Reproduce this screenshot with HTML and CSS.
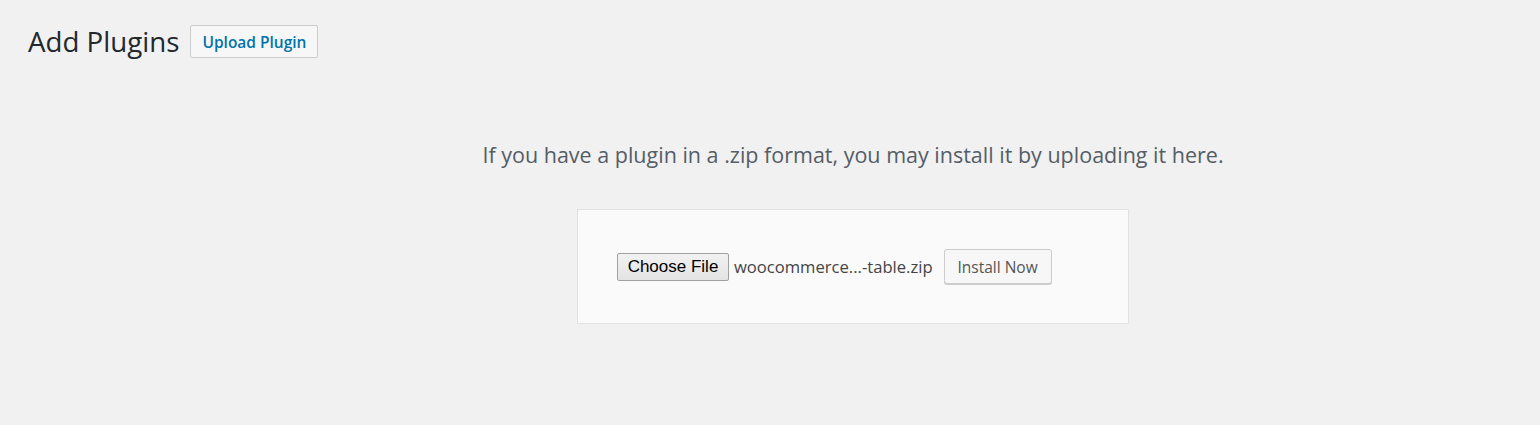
FILE: index.html
```html
<!DOCTYPE html>
<html lang="en">
<head>
<meta charset="utf-8">
<title>Add Plugins</title>
<link rel="stylesheet" href="styles.css">
</head>
<body>
<div class="wrap">
  <div class="header">
    <h1 class="page-title">Add Plugins</h1>
    <a class="title-action" href="#">Upload Plugin</a>
  </div>
  <div class="upload-plugin">
    <p class="install-help">If you have a plugin in a .zip format, you may install it by uploading it here.</p>
    <form class="upload-form">
      <span class="file-input">
        <button type="button" class="choose-btn">Choose File</button>
        <span class="file-name">woocommerce...-table.zip</span>
      </span>
      <button type="button" class="install-btn">Install Now</button>
    </form>
  </div>
</div>
</body>
</html>
```

FILE: styles.css
```css
html, body {
  margin: 0;
  padding: 0;
  background: #f1f1f1;
  height: 100%;
}
body {
  font-family: "Open Sans", "Noto Sans", sans-serif;
  color: #23282d;
}
.wrap {
  padding: 25px 0 0 28px;
}
.header {
  display: flex;
  align-items: center;
  gap: 11px;
  height: 33px;
}
.page-title {
  margin: 0;
  font-size: 27.7px;
  font-weight: 400;
  line-height: 33px;
  color: #23282d;
}
.title-action {
  display: flex;
  align-items: center;
  box-sizing: border-box;
  height: 33px;
  padding: 0 11px;
  border: 1px solid #cccccc;
  border-radius: 2px;
  background: #f7f7f7;
  color: #0073aa;
  font-size: 15.5px;
  font-weight: 600;
  text-decoration: none;
}
.upload-plugin {
  margin-left: 138px;
  margin-top: 82px;
  text-align: center;
}
.install-help {
  margin: 0;
  font-size: 21.5px;
  line-height: 30px;
  color: #555d66;
}
.upload-form {
  display: inline-flex;
  align-items: center;
  box-sizing: border-box;
  width: 552px;
  height: 115px;
  margin-top: 39px;
  padding-left: 39px;
  border: 1px solid #e2e2e2;
  background: #fafafa;
}
.file-input {
  display: flex;
  align-items: center;
  gap: 5px;
}
.choose-btn {
  box-sizing: border-box;
  width: 112px;
  height: 28px;
  padding: 0;
  border: 1px solid #a0a0a0;
  border-radius: 2px;
  background: linear-gradient(#f2f2f2, #e3e3e3);
  color: #000;
  font-family: "Liberation Sans", Arial, sans-serif;
  font-size: 17px;
}
.file-name {
  font-size: 16.6px;
  color: #444;
}
.install-btn {
  box-sizing: border-box;
  width: 108px;
  height: 35px;
  margin-left: 11px;
  padding: 0;
  border: 1px solid #cccccc;
  border-radius: 3px;
  background: #f7f7f7;
  box-shadow: 0 1px 0 #cccccc;
  color: #555;
  font-family: "Open Sans", "Noto Sans", sans-serif;
  font-size: 15.5px;
}
```
